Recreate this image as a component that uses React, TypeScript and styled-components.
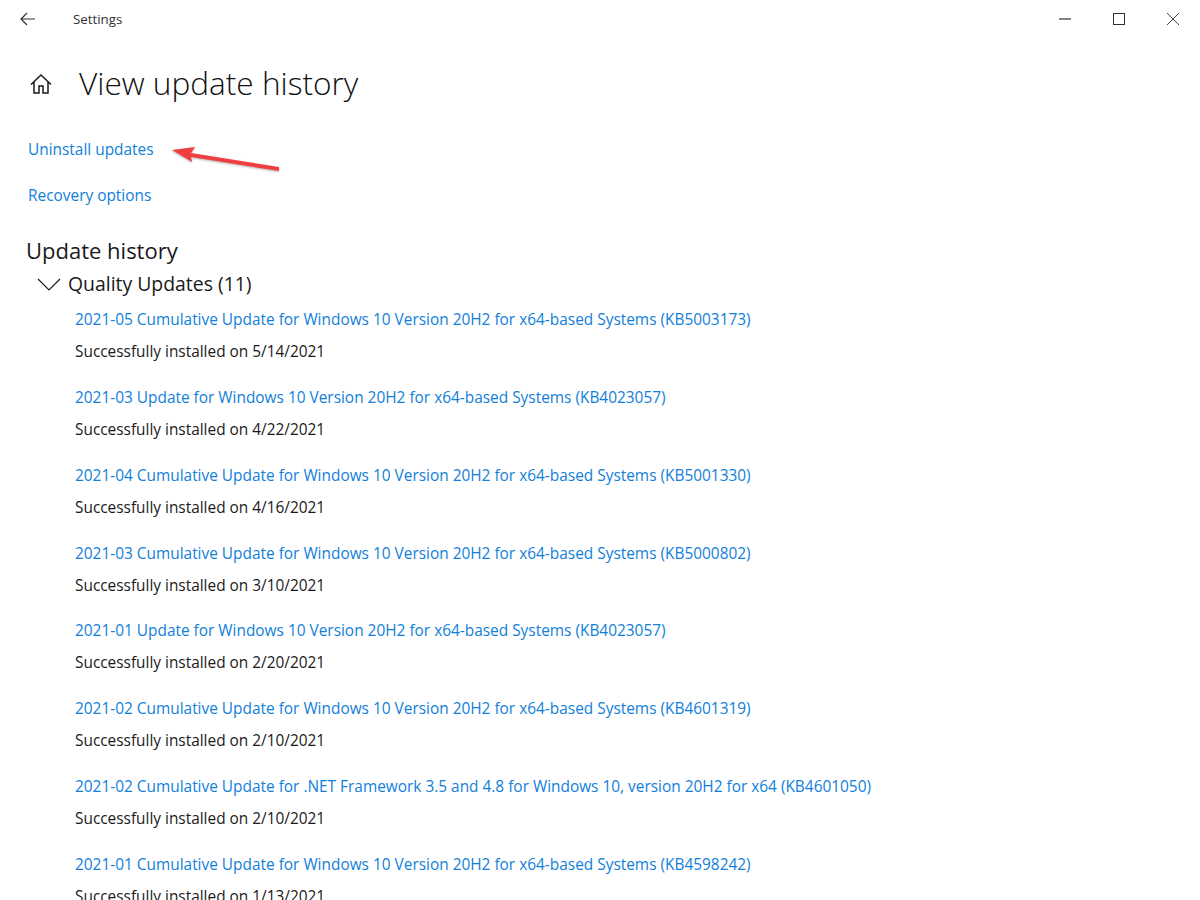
import styled, { createGlobalStyle } from "styled-components";

const GlobalStyle = createGlobalStyle`
  html, body {
    margin: 0;
    padding: 0;
    background: #fff;
    overflow: hidden;
  }
`;

const Window = styled.div`
  position: relative;
  width: 1200px;
  height: 900px;
  overflow: hidden;
  background: #fff;
  color: #1a1a1a;
  font-family: "Open Sans", "Noto Sans", sans-serif;
`;

const TitleBar = styled.div`
  display: flex;
  align-items: center;
  height: 38px;
  padding-left: 20px;
`;

const WindowTitle = styled.span`
  margin-left: 37px;
  font-size: 13.3px;
  color: #333;
`;

const WindowControls = styled.div`
  display: flex;
  gap: 42px;
  align-items: center;
  margin-left: auto;
  padding-right: 21px;
`;

const Content = styled.main`
  padding: 0 0 0 28px;
`;

const PageHeader = styled.header`
  display: flex;
  align-items: center;
  gap: 26px;
  height: 92px;
  padding-left: 1px;
`;

const PageTitle = styled.h1`
  margin: 0 0 2px;
  font-size: 31.6px;
  font-weight: 300;
  line-height: 90px;
  color: #111;
`;

const TopLinks = styled.div`
  display: flex;
  flex-direction: column;
  gap: 22px;
  margin-top: 8px;
`;

const Link = styled.a`
  color: #1180da;
  font-size: 15.42px;
  line-height: 24px;
`;

const SectionTitle = styled.h2`
  margin: 27px 0 0 -2px;
  font-size: 22px;
  font-weight: 400;
  line-height: 30px;
`;

const GroupHeader = styled.div`
  display: flex;
  align-items: center;
  gap: 8px;
  margin: 4px 0 0 9px;
  height: 30px;
`;

const GroupTitle = styled.span`
  margin-left: -1px;
  font-size: 19.4px;
  line-height: 30px;
`;

const UpdateList = styled.ul`
  list-style: none;
  margin: 9px 0 0 47px;
  padding: 0;
`;

const UpdateItem = styled.li`
  display: flex;
  flex-direction: column;
  gap: 8px;
  height: 77.85px;
`;

const Status = styled.span`
  font-size: 15.4px;
  line-height: 24px;
`;

const Annotation = styled.svg`
  position: absolute;
  left: 165px;
  top: 140px;
  filter: drop-shadow(0 1px 1px rgba(0, 0, 0, 0.3));
`;

const updates = [
  ["2021-05 Cumulative Update for Windows 10 Version 20H2 for x64-based Systems (KB5003173)", "5/14/2021"],
  ["2021-03 Update for Windows 10 Version 20H2 for x64-based Systems (KB4023057)", "4/22/2021"],
  ["2021-04 Cumulative Update for Windows 10 Version 20H2 for x64-based Systems (KB5001330)", "4/16/2021"],
  ["2021-03 Cumulative Update for Windows 10 Version 20H2 for x64-based Systems (KB5000802)", "3/10/2021"],
  ["2021-01 Update for Windows 10 Version 20H2 for x64-based Systems (KB4023057)", "2/20/2021"],
  ["2021-02 Cumulative Update for Windows 10 Version 20H2 for x64-based Systems (KB4601319)", "2/10/2021"],
  ["2021-02 Cumulative Update for .NET Framework 3.5 and 4.8 for Windows 10, version 20H2 for x64 (KB4601050)", "2/10/2021"],
  ["2021-01 Cumulative Update for Windows 10 Version 20H2 for x64-based Systems (KB4598242)", "1/13/2021"],
];

export default function App() {
  return (
    <Window>
      <GlobalStyle />
      <TitleBar>
        <svg width="16" height="14" viewBox="0 0 16 14" fill="none" stroke="#333" strokeWidth="1.2">
          <path d="M15 7H1M7 1L1 7l6 6" />
        </svg>
        <WindowTitle>Settings</WindowTitle>
        <WindowControls>
          <svg width="12" height="12" viewBox="0 0 12 12" stroke="#333" strokeWidth="1.2">
            <path d="M0 6h12" />
          </svg>
          <svg width="12" height="12" viewBox="0 0 12 12" fill="none" stroke="#333" strokeWidth="1">
            <rect x="0.5" y="0.5" width="11" height="11" />
          </svg>
          <svg width="12" height="12" viewBox="0 0 12 12" stroke="#444" strokeWidth="1">
            <path d="M0 0l12 12M12 0L0 12" />
          </svg>
        </WindowControls>
      </TitleBar>
      <Content>
        <PageHeader>
          <svg width="24" height="24" viewBox="0 0 24 24" fill="none" stroke="#1a1a1a" strokeWidth="1.5">
            <path d="M2 12.5L12 3l10 9.5M5 10v11h5v-7h4v7h5V10" />
          </svg>
          <PageTitle>View update history</PageTitle>
        </PageHeader>
        <TopLinks>
          <Link>Uninstall updates</Link>
          <Link>Recovery options</Link>
        </TopLinks>
        <SectionTitle>Update history</SectionTitle>
        <GroupHeader>
          <svg width="24" height="14" viewBox="0 0 24 14" fill="none" stroke="#1a1a1a" strokeWidth="1.2">
            <path d="M1 2l11 11L23 2" />
          </svg>
          <GroupTitle>Quality Updates (11)</GroupTitle>
        </GroupHeader>
        <UpdateList>
          {updates.map(([name, date]) => (
            <UpdateItem key={name}>
              <Link>{name}</Link>
              <Status>Successfully installed on {date}</Status>
            </UpdateItem>
          ))}
        </UpdateList>
      </Content>
      <Annotation width="120" height="36" viewBox="0 0 120 36" fill="#ef3f3f">
        <path d="M7 10L30 7l-4 6 88 14v4L26 17l1 5z" />
      </Annotation>
    </Window>
  );
}
